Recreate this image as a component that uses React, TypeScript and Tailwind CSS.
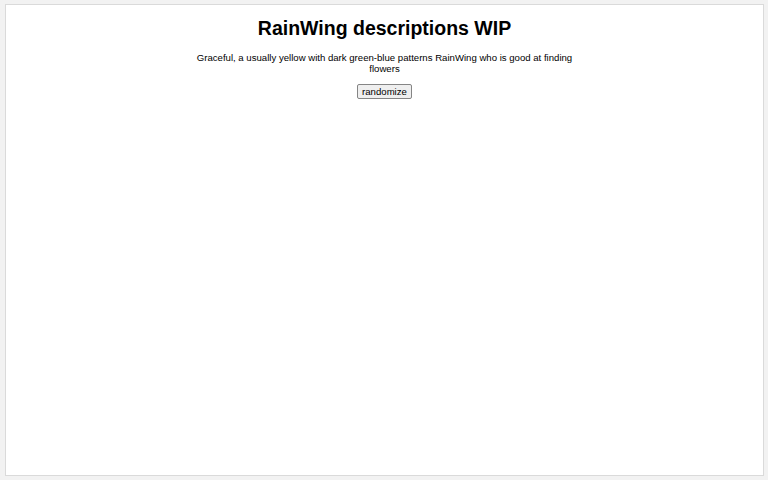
export default function App() {
  return (
    <div className="h-[480px] w-[768px] bg-[#f2f2f2] pt-[4px] pl-[5px] font-['Liberation_Sans'] text-black">
      <div className="flex h-[472px] w-[759px] flex-col items-center border border-[#dadada] bg-white">
        <h1 className="mt-[12px] text-[19.5px] font-bold leading-[22px]">RainWing descriptions WIP</h1>
        <p className="mt-[13px] w-[384px] text-center text-[9.6px] leading-[11px]">
          Graceful, a usually yellow with dark green-blue patterns RainWing who is good at finding flowers
        </p>
        <button className="mt-[10px] h-[15px] rounded-[2px] border border-[#858585] bg-[#efefef] px-[4px] text-[9.6px] leading-[12px]">
          randomize
        </button>
      </div>
    </div>
  );
}
